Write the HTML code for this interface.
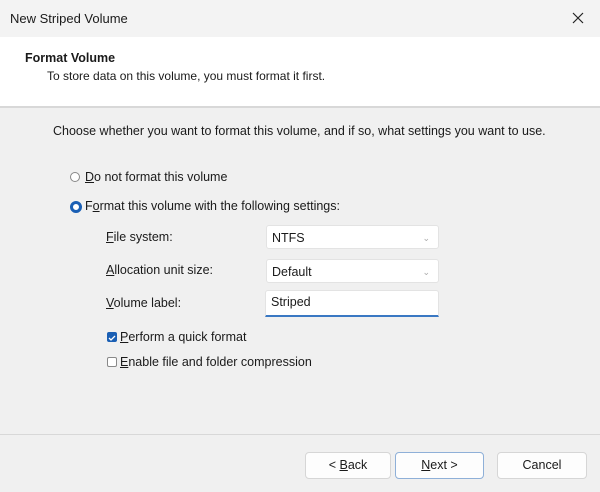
<!DOCTYPE html>
<html><head><style>
body{margin:0;width:600px;height:492px;background:#f0f0f0;font-family:"Liberation Sans",sans-serif;font-size:12px;color:#1a1a1a;position:relative;overflow:hidden}
.a{position:absolute;white-space:nowrap}
.box{position:absolute;background:#fff;border:1px solid #e3e3e3;border-radius:3px;box-sizing:border-box;padding-left:5px;font-size:12.5px}
.btn{position:absolute;background:#fdfdfd;border:1px solid #d6d6d6;border-radius:4px;box-sizing:border-box;text-align:center;line-height:25px;font-size:12.5px}
u{text-decoration:underline}
</style></head><body>
<div class="a" style="left:0;top:0;width:600px;height:37px;background:#f3f3f3"></div>
<div class="a" style="left:10px;top:11px;font-size:13px">New Striped Volume</div>
<svg class="a" style="left:572px;top:12px" width="12" height="12"><path d="M1 1L11 11M11 1L1 11" stroke="#222" stroke-width="1.2"/></svg>
<div class="a" style="left:0;top:37px;width:600px;height:69px;background:#fff;border-bottom:2px solid #d8d8d8"></div>
<div class="a" style="left:25px;top:51px;font-weight:bold;font-size:12.5px">Format Volume</div>
<div class="a" style="left:47px;top:69px">To store data on this volume, you must format it first.</div>
<div class="a" style="left:53px;top:124px;font-size:12.5px">Choose whether you want to format this volume, and if so, what settings you want to use.</div>
<div class="a" style="left:70px;top:172px;width:8px;height:8px;border:1px solid #888;border-radius:50%;background:#fff"></div>
<div class="a" style="left:85px;top:170px;font-size:12.5px"><u>D</u>o not format this volume</div>
<div class="a" style="left:70px;top:201px;width:6px;height:6px;border:3px solid #1a5fb4;border-radius:50%;background:#fff"></div>
<div class="a" style="left:85px;top:199px;font-size:12.5px">F<u>o</u>rmat this volume with the following settings:</div>
<div class="a" style="left:106px;top:230px;font-size:12.5px"><u>F</u>ile system:</div>
<div class="box" style="left:266px;top:225px;width:173px;height:24px;line-height:24px">NTFS<span style="position:absolute;right:8px;color:#aaa;font-size:9px">&#8964;</span></div>
<div class="a" style="left:106px;top:263px;font-size:12.5px"><u>A</u>llocation unit size:</div>
<div class="box" style="left:266px;top:259px;width:173px;height:24px;line-height:24px">Default<span style="position:absolute;right:8px;color:#aaa;font-size:9px">&#8964;</span></div>
<div class="a" style="left:106px;top:296px;font-size:12.5px"><u>V</u>olume label:</div>
<div class="box" style="left:265px;top:290px;width:174px;height:27px;line-height:22px;border-bottom:2px solid #3a78c3;border-radius:3px 3px 0 0">Striped</div>
<div class="a" style="left:107px;top:332px;width:10px;height:10px;background:#1a5fb4;border-radius:2px"><svg width="10" height="10"><path d="M2 5L4 7L8 3" stroke="#fff" stroke-width="1.3" fill="none"/></svg></div>
<div class="a" style="left:120px;top:330px;font-size:12.5px"><u>P</u>erform a quick format</div>
<div class="a" style="left:107px;top:357px;width:8px;height:8px;border:1px solid #888;border-radius:2px;background:#fff"></div>
<div class="a" style="left:120px;top:355px;font-size:12.5px"><u>E</u>nable file and folder compression</div>
<div class="a" style="left:0;top:434px;width:600px;height:1px;background:#d8d8d8"></div>
<div class="btn" style="left:305px;top:452px;width:86px;height:27px">&lt; <u>B</u>ack</div>
<div class="btn" style="left:395px;top:452px;width:89px;height:27px;border-color:#8fb0d8"><u>N</u>ext &gt;</div>
<div class="btn" style="left:497px;top:452px;width:90px;height:27px">Cancel</div>
</body></html>
